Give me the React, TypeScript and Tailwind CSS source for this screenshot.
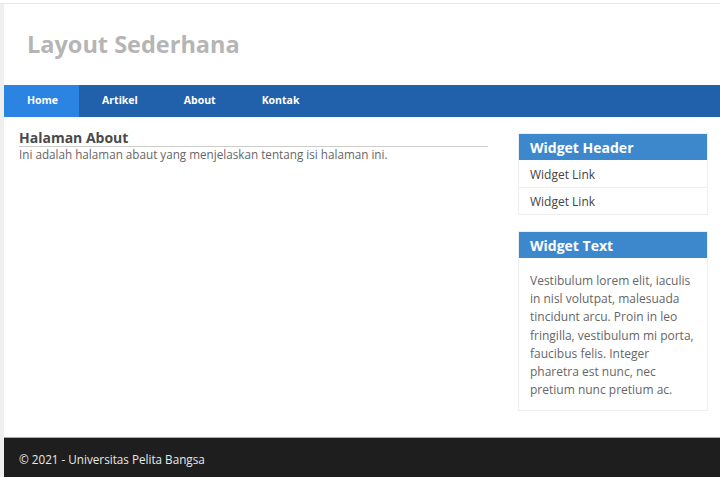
export default function App() {
  const font = { fontFamily: '"Open Sans", "Liberation Sans", sans-serif' };
  return (
    <div className="h-[477px] w-[720px] overflow-hidden bg-white" style={font}>
      <div className="h-[3px] bg-white" />
      <div className="flex border-t border-[#e8e8e8]">
        <div className="w-[4px] shrink-0 bg-[#efefef]" />
        <div className="flex-1 bg-white">
          {/* Header */}
          <header className="flex h-[81px] items-center pl-[23px]">
            <h1 className="text-[23.5px] font-bold text-[#b5b5b5]">Layout Sederhana</h1>
          </header>

          {/* Nav */}
          <nav className="flex h-[32px] items-stretch bg-[#2160aa] text-[10.5px] font-bold text-white">
            <a className="flex items-center bg-[#2b83e2] pl-[23px] pr-[21px]">Home</a>
            <a className="flex items-center px-[23px]">Artikel</a>
            <a className="flex items-center px-[23px]">About</a>
            <a className="flex items-center px-[23px]">Kontak</a>
          </nav>

          {/* Content */}
          <div className="flex h-[320px] pt-[13px]">
            <main className="ml-[15px] w-[469px]">
              <h2 className="border-b border-[#cccccc] text-[14px] font-bold leading-[16px] text-[#4a4a4a]">Halaman About</h2>
              <p className="text-[11.7px] leading-[15px] text-[#666666]">
                Ini adalah halaman abaut yang menjelaskan tentang isi halaman ini.
              </p>
            </main>
            <aside className="ml-[30px] w-[190px] pt-[3px]">
              <div className="border border-[#eeeeee] bg-white">
                <div className="flex h-[26px] items-center bg-[#3d88cc] px-[11px] text-[14px] font-bold text-white">Widget Header</div>
                <div className="flex h-[28px] items-center border-b border-[#eeeeee] px-[11px] pt-[2px] text-[12px] text-[#444444]">Widget Link</div>
                <div className="flex h-[26px] items-center px-[11px] pt-[2px] text-[12px] text-[#444444]">Widget Link</div>
              </div>
              <div className="mt-[16px] border border-[#eeeeee] bg-white">
                <div className="flex h-[26px] items-center bg-[#3d88cc] px-[11px] text-[14px] font-bold text-white">Widget Text</div>
                <p className="px-[11px] pb-[11px] pt-[14px] text-[12px] leading-[18.2px] text-[#666666]">
                  Vestibulum lorem elit, iaculis in nisl volutpat, malesuada tincidunt arcu. Proin in leo fringilla, vestibulum mi porta, faucibus felis. Integer pharetra est nunc, nec pretium nunc pretium ac.
                </p>
              </div>
            </aside>
          </div>

          {/* Footer */}
          <footer className="flex h-[44px] items-center border-t border-[#aaaaaa] bg-[#1e1e1e] pl-[15px] text-[11.7px] text-[#e8e8e8]">
            © 2021 - Universitas Pelita Bangsa
          </footer>
        </div>
      </div>
    </div>
  );
}
